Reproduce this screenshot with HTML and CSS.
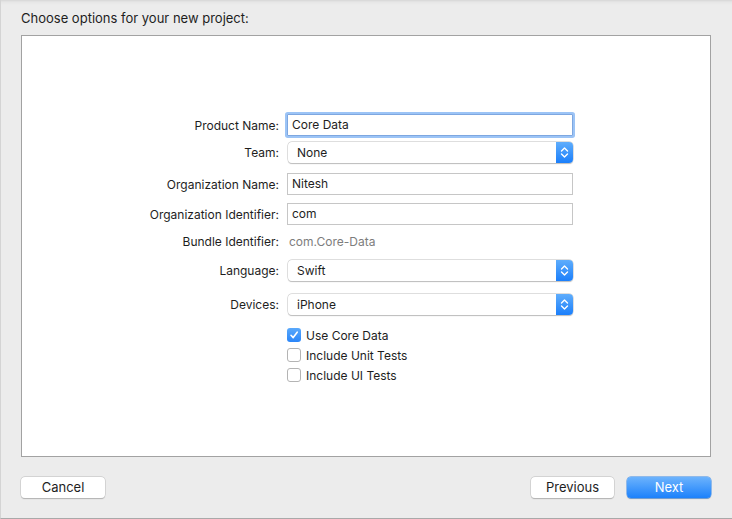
FILE: index.html
```html
<!DOCTYPE html>
<html>
<head>
<meta charset="utf-8">
<link rel="stylesheet" href="styles.css">
</head>
<body>
<div class="window">
  <div class="header"><span class="title">Choose options for your new project:</span></div>
  <div class="panel">
    <div class="form">
      <div class="row r1">
        <div class="label">Product Name:</div>
        <div class="field focus">Core Data</div>
      </div>
      <div class="row r2">
        <div class="label">Team:</div>
        <div class="popup"><span class="pv">None</span><span class="stepper"><svg width="9" height="13" viewBox="0 0 9 13"><path d="M1.5 5 L4.5 2 L7.5 5" fill="none" stroke="#fff" stroke-width="1.4" stroke-linecap="round" stroke-linejoin="round"/><path d="M1.5 8 L4.5 11 L7.5 8" fill="none" stroke="#fff" stroke-width="1.4" stroke-linecap="round" stroke-linejoin="round"/></svg></span></div>
      </div>
      <div class="row r3">
        <div class="label">Organization Name:</div>
        <div class="field">Nitesh</div>
      </div>
      <div class="row r4">
        <div class="label">Organization Identifier:</div>
        <div class="field">com</div>
      </div>
      <div class="row r5">
        <div class="label">Bundle Identifier:</div>
        <div class="static">com.Core-Data</div>
      </div>
      <div class="row r6">
        <div class="label">Language:</div>
        <div class="popup"><span class="pv">Swift</span><span class="stepper"><svg width="9" height="13" viewBox="0 0 9 13"><path d="M1.5 5 L4.5 2 L7.5 5" fill="none" stroke="#fff" stroke-width="1.4" stroke-linecap="round" stroke-linejoin="round"/><path d="M1.5 8 L4.5 11 L7.5 8" fill="none" stroke="#fff" stroke-width="1.4" stroke-linecap="round" stroke-linejoin="round"/></svg></span></div>
      </div>
      <div class="row r7">
        <div class="label">Devices:</div>
        <div class="popup"><span class="pv">iPhone</span><span class="stepper"><svg width="9" height="13" viewBox="0 0 9 13"><path d="M1.5 5 L4.5 2 L7.5 5" fill="none" stroke="#fff" stroke-width="1.4" stroke-linecap="round" stroke-linejoin="round"/><path d="M1.5 8 L4.5 11 L7.5 8" fill="none" stroke="#fff" stroke-width="1.4" stroke-linecap="round" stroke-linejoin="round"/></svg></span></div>
      </div>
      <div class="row r8">
        <div class="label"></div>
        <div class="check"><span class="box on"><svg width="10" height="10" viewBox="0 0 10 10"><path d="M2 5.3 L4.2 7.6 L8.2 2.2" fill="none" stroke="#fff" stroke-width="1.6" stroke-linecap="round" stroke-linejoin="round"/></svg></span><span>Use Core Data</span></div>
      </div>
      <div class="row r9">
        <div class="label"></div>
        <div class="check"><span class="box"></span><span>Include Unit Tests</span></div>
      </div>
      <div class="row r9">
        <div class="label"></div>
        <div class="check"><span class="box"></span><span>Include UI Tests</span></div>
      </div>
    </div>
  </div>
  <div class="footer">
    <div class="btn cancel">Cancel</div>
    <div class="spacer"></div>
    <div class="btn">Previous</div>
    <div class="btn primary">Next</div>
  </div>
</div>
</body>
</html>
```
FILE: styles.css
```css
html, body {
  margin: 0;
  padding: 0;
}
body {
  width: 732px;
  height: 519px;
  overflow: hidden;
  background: #ececec;
  font-family: Inter, "Liberation Sans", sans-serif;
  font-size: 13px;
  color: #1e1e1e;
}
.window {
  box-sizing: border-box;
  width: 732px;
  height: 519px;
  background: linear-gradient(#d6d6d6 0px, #e6e6e6 2px, #ececec 5px, #ececec 100%);
  border-bottom: 1px solid #a9a9a9;
  border-left: 1px solid #d4d4d4;
  display: flex;
  flex-direction: column;
}
.header {
  height: 35px;
  box-sizing: border-box;
  padding: 10px 0 0 20px;
  line-height: 16px;
}
.panel {
  margin-left: 20px;
  width: 690px;
  height: 422px;
  box-sizing: border-box;
  background: #fff;
  border: 1px solid #a2a2a2;
  padding-top: 78px;
}
.form {
  display: flex;
  flex-direction: column;
  font-size: 12px;
}
.row {
  display: flex;
  align-items: center;
  gap: 8px;
}
.label {
  width: 257px;
  text-align: right;
  flex: none;
}
.r1 { height: 22px; }
.r2 { height: 21px; margin-top: 6px; }
.r3 { height: 22px; margin-top: 10px; }
.r4 { height: 22px; margin-top: 8px; }
.r5 { height: 16px; margin-top: 8px; }
.r6 { height: 21px; margin-top: 11px; }
.r7 { height: 21px; margin-top: 13px; }
.r8 { height: 20px; margin-top: 10px; }
.r9 { height: 20px; }
.field {
  box-sizing: border-box;
  width: 286px;
  height: 22px;
  border: 1px solid #c6c6c6;
  padding-left: 4px;
  line-height: 20px;
  background: #fff;
}
.field.focus {
  border-color: #7ea7e0;
  box-shadow: 0 0 0 2px #9cc4f6;
  border-radius: 1px;
}
.popup {
  box-sizing: border-box;
  width: 285px;
  height: 21px;
  margin-left: 1px;
  border-radius: 4px;
  background: #fff;
  box-shadow: 0 0 0 0.5px #c4c4c4, 0 0.5px 1px rgba(0,0,0,0.28);
  display: flex;
  align-items: center;
  position: relative;
}
.pv {
  flex: 1;
  padding-left: 9px;
  line-height: 21px;
}
.stepper {
  width: 17px;
  height: 21px;
  border-radius: 0 4px 4px 0;
  background: linear-gradient(#5fadfc, #1b7ffb);
  display: flex;
  align-items: center;
  justify-content: center;
}
.static {
  color: #7d7d7d;
  padding-left: 2px;
}
.check {
  display: flex;
  align-items: center;
  gap: 5px;
}
.box {
  box-sizing: border-box;
  width: 14px;
  height: 14px;
  border: 1px solid #b4b4b4;
  border-radius: 3px;
  background: #fff;
  display: flex;
  align-items: center;
  justify-content: center;
}
.box.on {
  border: none;
  background: linear-gradient(#5aa9fb, #2a86f9);
}
.footer {
  display: flex;
  align-items: center;
  padding: 20px 0 0 20px;
  gap: 13px;
  width: 710px;
  box-sizing: border-box;
}
.spacer { flex: 1; }
.btn {
  box-sizing: border-box;
  width: 83px;
  height: 21px;
  border-radius: 4px;
  background: #fff;
  box-shadow: 0 0 0 0.5px #c2c2c2, 0 0.5px 1px rgba(0,0,0,0.3);
  text-align: center;
  line-height: 21px;
  color: #1e1e1e;
}
.cancel { width: 84px; }
.primary {
  width: 84px;
  color: #fff;
  background: linear-gradient(#6cb3fd, #1c81fb);
  box-shadow: 0 0 0 0.5px #3a8ef0, 0 0.5px 1px rgba(0,0,0,0.3);
}
```
